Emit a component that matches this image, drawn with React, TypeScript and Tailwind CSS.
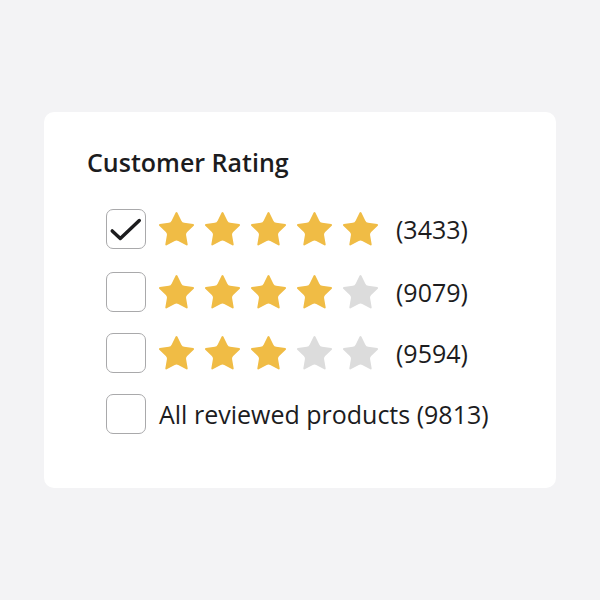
import { useState } from "react";

type Row = {
  id: number;
  stars: number | null;
  label: string;
  checked: boolean;
};

const rows: Row[] = [
  { id: 1, stars: 5, label: "(3433)", checked: true },
  { id: 2, stars: 4, label: "(9079)", checked: false },
  { id: 3, stars: 3, label: "(9594)", checked: false },
  { id: 4, stars: null, label: "All reviewed products (9813)", checked: false },
];

const Star = ({ on }: { on: boolean }) => {
  const c = on ? "#F0BC45" : "#DCDCDC";
  return (
    <svg width="35" height="34" viewBox="2 2 20 19.4" className="shrink-0">
      <path
        d="M11.525 2.295a.53.53 0 0 1 .95 0l2.31 4.679a2.123 2.123 0 0 0 1.595 1.16l5.166.756a.53.53 0 0 1 .294.904l-3.736 3.638a2.123 2.123 0 0 0-.611 1.878l.882 5.14a.53.53 0 0 1-.771.56l-4.618-2.428a2.122 2.122 0 0 0-1.973 0L6.396 21.01a.53.53 0 0 1-.77-.56l.881-5.139a2.122 2.122 0 0 0-.611-1.879L2.16 9.795a.53.53 0 0 1 .294-.906l5.165-.755a2.122 2.122 0 0 0 1.597-1.16z"
        fill={c}
      />
    </svg>
  );
};

const App = () => {
  const [checked, setChecked] = useState<number[]>(
    rows.filter((r) => r.checked).map((r) => r.id)
  );
  const toggle = (id: number) => {
    setChecked((c) => (c.includes(id) ? c.filter((x) => x !== id) : [...c, id]));
  };

  return (
    <div
      className="w-[600px] h-[600px] bg-[#f3f3f5] pt-[112px] pl-[44px]"
      style={{ fontFamily: '"Open Sans", sans-serif' }}
    >
      <div className="w-[512px] h-[376px] bg-white rounded-[10px] pt-[33px] pl-[43px]">
        <h2 className="text-[25px] leading-[34px] font-semibold text-[#1c1c1e]">
          Customer Rating
        </h2>
        <ul className="mt-[30px] ml-[19px] flex flex-col">
          {rows.map((r, idx) => {
            const on = checked.includes(r.id);
            return (
              <li
                key={r.id}
                className={
                  "flex items-center h-[40px] cursor-pointer " +
                  (idx === 0 ? "" : idx === 1 ? "mt-[23px]" : "mt-[21px]")
                }
                onClick={() => toggle(r.id)}
              >
                <div className="w-[40px] h-[40px] rounded-[7px] border border-[#a9a9ab] flex items-center justify-center shrink-0">
                  {on && (
                    <svg width="40" height="40" viewBox="0 0 40 40">
                      <path
                        d="M5.5 22 L14 30 L34 11"
                        fill="none"
                        stroke="#1c1c1e"
                        strokeWidth="3.6"
                        strokeLinecap="round"
                        strokeLinejoin="round"
                      />
                    </svg>
                  )}
                </div>
                {r.stars !== null && (
                  <div className="flex items-center gap-[11px] ml-[13px]">
                    {[1, 2, 3, 4, 5].map((i) => (
                      <Star key={i} on={i <= (r.stars ?? 0)} />
                    ))}
                  </div>
                )}
                <span
                  className={
                    "text-[25px] leading-[34px] text-[#1c1c1e] whitespace-nowrap " +
                    (r.stars !== null ? "ml-[18px]" : "ml-[13px]")
                  }
                >
                  {r.label}
                </span>
              </li>
            );
          })}
        </ul>
      </div>
    </div>
  );
};

export default App;
